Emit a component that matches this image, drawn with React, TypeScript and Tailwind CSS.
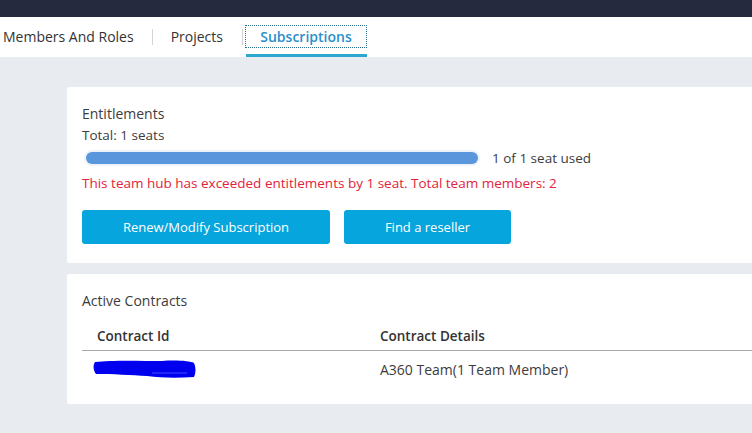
export default function App() {
  return (
    <div className="w-[752px] h-[433px] overflow-hidden bg-[#e8ecf0] font-['Open_Sans',sans-serif] text-[#3c3c3c]">
      {/* top bar */}
      <div className="h-[17px] bg-[#262a3f]" />

      {/* tabs */}
      <div className="h-[40px] bg-white flex items-stretch">
        <div className="flex items-center pl-[3px] pb-[1px] text-[14px] text-[#333]">
          <span>Members And Roles</span>
          <span className="mx-[18px] w-px h-[16px] bg-[#d4d4d4]" />
          <span>Projects</span>
          <span className="ml-[19px] mr-[2px] w-px h-[16px] bg-[#d4d4d4]" />
        </div>
        <div className="relative flex flex-col justify-start">
          <div className="mt-[8px] h-[23px] w-[122px] border border-dotted border-[#2a6f8f] flex items-center justify-center text-[14px] font-semibold text-[#2b8fcb]">
            Subscriptions
          </div>
          <div className="absolute bottom-0 left-[1px] w-[121px] h-[3px] bg-[#2ba7d0]" />
        </div>
      </div>

      {/* content */}
      <div className="pl-[67px] pt-[30px] flex flex-col gap-[11px]">
        <div className="bg-white h-[176px] pl-[15px] pt-[17px] rounded-l-[2px]">
          <div className="text-[14px] leading-[20px] text-[#3c3c3c]">Entitlements</div>
          <div className="text-[13.5px] leading-[18px] mt-[2px] text-[#3c3c3c]">Total: 1 seats</div>
          <div className="flex items-center mt-[4px]">
            <div className="ml-[2px] w-[396px] h-[16px] rounded-full bg-[#eef3fa] p-[2px]">
              <div className="w-full h-full rounded-full bg-[#5a96dc]" />
            </div>
            <span className="ml-[12px] text-[13.5px] text-[#3c3c3c]">1 of 1 seat used</span>
          </div>
          <div className="mt-[6px] text-[13.5px] leading-[18px] text-[#e2233a]">
            This team hub has exceeded entitlements by 1 seat. Total team members: 2
          </div>
          <div className="flex gap-[14px] mt-[18px]">
            <button className="w-[248px] h-[34px] rounded-[3px] bg-[#06a5dd] text-white text-[13px]">
              Renew/Modify Subscription
            </button>
            <button className="w-[167px] h-[34px] rounded-[3px] bg-[#06a5dd] text-white text-[13px]">
              Find a reseller
            </button>
          </div>
        </div>

        <div className="bg-white h-[130px] pl-[15px] pt-[17px] rounded-l-[2px]">
          <div className="text-[14px] leading-[20px] text-[#3c3c3c]">Active Contracts</div>
          <div className="mt-[16px] flex border-b border-[#a8a8a8] h-[24px] items-start leading-[18px] text-[13.5px] font-semibold text-[#333]">
            <div className="w-[298px] pl-[15px]">Contract Id</div>
            <div>Contract Details</div>
          </div>
          <div className="flex items-center h-[36px] text-[14px] text-[#3c3c3c]">
            <div className="w-[298px] pl-[10px]">
              <svg width="106" height="22" viewBox="0 0 106 22" className="block">
                <path
                  d="M3 4 C20 2 50 3 70 3 C85 2 98 3 102 5 C104 9 104 15 102 19 C85 20 70 20 55 18 C40 17 20 16 4 16 C1 12 1 7 3 4 Z"
                  fill="#0000ee"
                />
                <path d="M60 15 L95 15" stroke="#4a4aff" strokeWidth="1" />
              </svg>
            </div>
            <div>A360 Team(1 Team Member)</div>
          </div>
        </div>
      </div>
    </div>
  );
}
